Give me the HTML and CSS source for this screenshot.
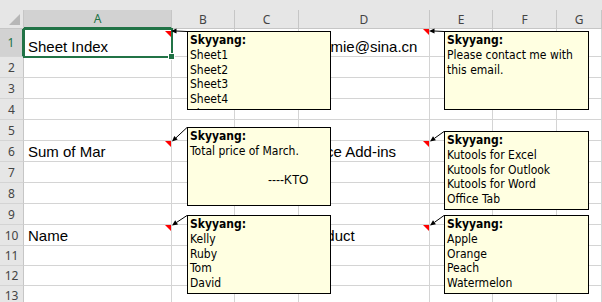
FILE: index.html
```html
<!DOCTYPE html>
<html lang="en">
<head>
    <meta charset="UTF-8">
    <title>Comments - Sheet1</title>
    <link rel="stylesheet" href="styles.css">
</head>
<body>
    <div class="sheet">
        <div class="top-strip"></div>
        <div class="row head">
            <div class="corner"><span class="corner-tri"></span></div>
            <div class="col active">A</div>
            <div class="col">B</div>
            <div class="col">C</div>
            <div class="col">D</div>
            <div class="col">E</div>
            <div class="col">F</div>
            <div class="col">G</div>
        </div>
        <div class="row tall">
            <div class="num active">1</div>
            <div class="cell selected note">Sheet Index<span class="handle"></span></div>
            <div class="cell"></div>
            <div class="cell"></div>
            <div class="cell note">yujamie@sina.cn</div>
            <div class="cell"></div>
            <div class="cell"></div>
            <div class="cell"></div>
        </div>
        <div class="row">
            <div class="num">2</div>
            <div class="cell"></div><div class="cell"></div><div class="cell"></div><div class="cell"></div><div class="cell"></div><div class="cell"></div><div class="cell"></div>
        </div>
        <div class="row">
            <div class="num">3</div>
            <div class="cell"></div><div class="cell"></div><div class="cell"></div><div class="cell"></div><div class="cell"></div><div class="cell"></div><div class="cell"></div>
        </div>
        <div class="row">
            <div class="num">4</div>
            <div class="cell"></div><div class="cell"></div><div class="cell"></div><div class="cell"></div><div class="cell"></div><div class="cell"></div><div class="cell"></div>
        </div>
        <div class="row">
            <div class="num">5</div>
            <div class="cell"></div><div class="cell"></div><div class="cell"></div><div class="cell"></div><div class="cell"></div><div class="cell"></div><div class="cell"></div>
        </div>
        <div class="row">
            <div class="num">6</div>
            <div class="cell note">Sum of Mar</div>
            <div class="cell"></div>
            <div class="cell"></div>
            <div class="cell note">Office Add-ins</div>
            <div class="cell"></div>
            <div class="cell"></div>
            <div class="cell"></div>
        </div>
        <div class="row">
            <div class="num">7</div>
            <div class="cell"></div><div class="cell"></div><div class="cell"></div><div class="cell"></div><div class="cell"></div><div class="cell"></div><div class="cell"></div>
        </div>
        <div class="row">
            <div class="num">8</div>
            <div class="cell"></div><div class="cell"></div><div class="cell"></div><div class="cell"></div><div class="cell"></div><div class="cell"></div><div class="cell"></div>
        </div>
        <div class="row">
            <div class="num">9</div>
            <div class="cell"></div><div class="cell"></div><div class="cell"></div><div class="cell"></div><div class="cell"></div><div class="cell"></div><div class="cell"></div>
        </div>
        <div class="row">
            <div class="num">10</div>
            <div class="cell note">Name</div>
            <div class="cell"></div>
            <div class="cell"></div>
            <div class="cell note">Product</div>
            <div class="cell"></div>
            <div class="cell"></div>
            <div class="cell"></div>
        </div>
        <div class="row short">
            <div class="num">11</div>
            <div class="cell"></div><div class="cell"></div><div class="cell"></div><div class="cell"></div><div class="cell"></div><div class="cell"></div><div class="cell"></div>
        </div>
        <div class="row short">
            <div class="num">12</div>
            <div class="cell"></div><div class="cell"></div><div class="cell"></div><div class="cell"></div><div class="cell"></div><div class="cell"></div><div class="cell"></div>
        </div>
        <div class="row short">
            <div class="num">13</div>
            <div class="cell"></div><div class="cell"></div><div class="cell"></div><div class="cell"></div><div class="cell"></div><div class="cell"></div><div class="cell"></div>
        </div>

        <!-- comment boxes -->
        <div class="comment c-a1">
            <div class="who">Skyyang:</div>
            <div>Sheet1</div>
            <div>Sheet2</div>
            <div>Sheet3</div>
            <div>Sheet4</div>
            <div>Sheet5</div>
        </div>
        <div class="comment wide c-d1">
            <div class="who">Skyyang:</div>
            <div>Please contact me with</div>
            <div>this email.</div>
        </div>
        <div class="comment c-a6">
            <div class="who">Skyyang:</div>
            <div>Total price of March.</div>
            <div>&nbsp;</div>
            <div class="sign">----KTO</div>
        </div>
        <div class="comment wide c-d6">
            <div class="who">Skyyang:</div>
            <div>Kutools for Excel</div>
            <div>Kutools for Outlook</div>
            <div>Kutools for Word</div>
            <div>Office Tab</div>
        </div>
        <div class="comment c-a10">
            <div class="who">Skyyang:</div>
            <div>Kelly</div>
            <div>Ruby</div>
            <div>Tom</div>
            <div>David</div>
        </div>
        <div class="comment wide c-d10">
            <div class="who">Skyyang:</div>
            <div>Apple</div>
            <div>Orange</div>
            <div>Peach</div>
            <div>Watermelon</div>
        </div>

        <!-- leader lines from each box to its cell -->
        <svg class="arrows" width="602" height="302" viewBox="0 0 602 302">
            <g stroke="#000" stroke-width="1" fill="none">
                <line x1="187" y1="31.5" x2="176" y2="31"/>
                <line x1="444" y1="31.5" x2="434" y2="31"/>
                <line x1="187" y1="127.5" x2="176" y2="137.8"/>
                <line x1="444" y1="131.5" x2="434.5" y2="138.3"/>
                <line x1="187" y1="215.5" x2="176.6" y2="222.4"/>
                <line x1="444" y1="215.5" x2="434.5" y2="222.3"/>
            </g>
            <g fill="#000">
                <polygon points="171,31 176.5,28.5 176.5,33.5"/>
                <polygon points="429,31 434.5,28.5 434.5,33.5"/>
                <polygon points="172,141.5 177.7,139.6 174.3,136"/>
                <polygon points="430,141.5 435.9,140.3 433,136.3"/>
                <polygon points="172,225.5 178,224.5 175.2,220.3"/>
                <polygon points="430,225.5 435.9,224.3 433,220.3"/>
            </g>
        </svg>
    </div>
</body>
</html>
```

FILE: styles.css
```css
body {
    margin: 0;
    background: #fff;
    overflow: hidden;
}
.sheet {
    position: relative;
    width: 602px;
    height: 302px;
    overflow: hidden;
    font-family: 'Liberation Sans', Arial, sans-serif;
}
.top-strip {
    height: 10px;
    background: #e6e6e6;
}
.row {
    display: grid;
    grid-template-columns: 24px 148px 63px 64px 131px 63px 64px 45px;
    height: 21px;
}
.row.head {
    height: 19px;
}
.row.tall {
    height: 28px;
}
.row.short {
    height: 20px;
}
.corner {
    box-sizing: border-box;
    background: #e6e6e6;
    border-right: 1px solid #c6c6c6;
    border-bottom: 1px solid #c6c6c6;
    display: flex;
    justify-content: flex-end;
    align-items: flex-end;
    padding: 0 3px 3px 0;
}
.corner-tri {
    width: 0;
    height: 0;
    border-left: 11px solid transparent;
    border-bottom: 11px solid #b7b7b7;
}
.col, .num {
    box-sizing: border-box;
    background: #e6e6e6;
    border-right: 1px solid #c6c6c6;
    border-bottom: 1px solid #c6c6c6;
    display: flex;
    align-items: center;
    justify-content: center;
    font-family: 'Noto Sans', 'Open Sans', sans-serif;
    font-size: 12px;
    color: #444;
}
.num {
    border-bottom-color: #d4d4d4;
}
.col.active {
    background: #d2d2d2;
    color: #217346;
    border-bottom: 2px solid #217346;
}
.num.active {
    background: #d2d2d2;
    color: #217346;
    border-right: 2px solid #217346;
}
.cell {
    position: relative;
    box-sizing: border-box;
    border-right: 1px solid #d4d4d4;
    border-bottom: 1px solid #d4d4d4;
    padding: 0 4px;
    display: flex;
    align-items: flex-end;
    font-size: 15px;
    line-height: 19px;
    color: #000;
    white-space: nowrap;
}
.note::after {
    content: "";
    position: absolute;
    top: 0;
    right: 0;
    border-top: 6px solid #ff0000;
    border-left: 6px solid transparent;
}
.selected {
    outline: 2px solid #217346;
    outline-offset: -1px;
    z-index: 1;
}
.selected.note::after {
    top: 2px;
}
.handle {
    position: absolute;
    right: -4px;
    bottom: -4px;
    width: 5px;
    height: 5px;
    background: #217346;
    border: 1px solid #fff;
}
.comment {
    position: absolute;
    z-index: 2;
    box-sizing: border-box;
    width: 144px;
    height: 79px;
    padding: 1px 2px;
    background: #ffffe1;
    border: 1px solid #000;
    overflow: hidden;
    font-family: 'DejaVu Sans Condensed', 'DejaVu Sans', sans-serif;
    font-stretch: condensed;
    font-size: 12px;
    line-height: 14.75px;
    color: #000;
    white-space: nowrap;
}
.comment.wide {
    width: 145px;
}
.comment .who {
    font-weight: bold;
}
.comment .sign {
    font-family: 'Liberation Sans', Arial, sans-serif;
    font-stretch: normal;
    padding-left: 78px;
}
.c-a1 { left: 187px; top: 31px; }
.c-d1 { left: 444px; top: 31px; }
.c-a6 { left: 187px; top: 127px; }
.c-d6 { left: 444px; top: 131px; }
.c-a10 { left: 187px; top: 215px; }
.c-d10 { left: 444px; top: 215px; }
.arrows {
    position: absolute;
    left: 0;
    top: 0;
    z-index: 3;
    pointer-events: none;
}
```
